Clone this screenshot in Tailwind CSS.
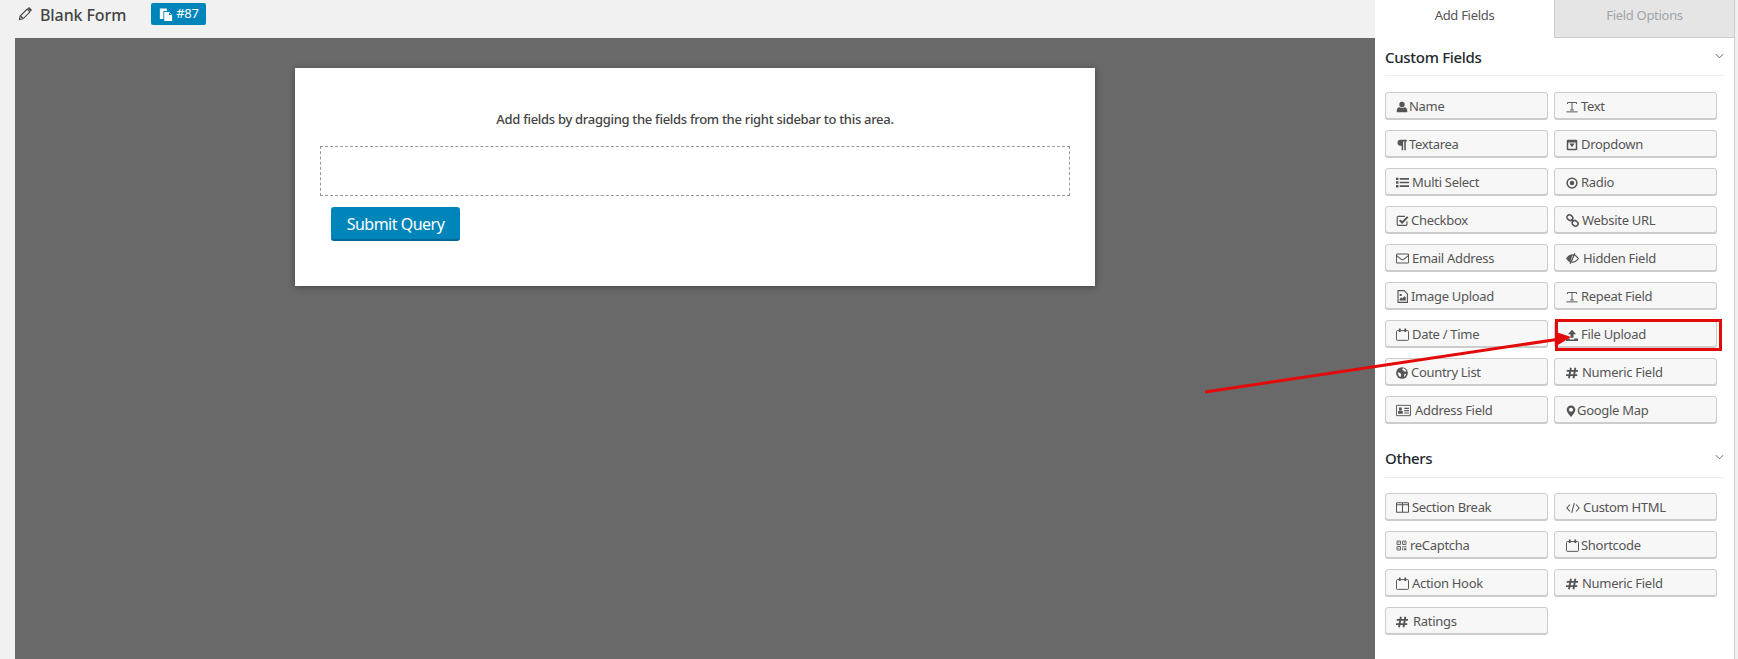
<!DOCTYPE html>
<html lang="en">
<head>
  <meta charset="UTF-8" />
  <title>Blank Form</title>
  <script src="https://cdn.jsdelivr.net/npm/@tailwindcss/browser@4"></script>
</head>
<body class="relative flex h-screen overflow-hidden bg-[#f1f1f1] font-['Noto_Sans',sans-serif] text-[13px] tracking-[-0.3px] text-[#555]">

  <svg class="hidden">
    <symbol id="i-user" viewBox="0 0 16 16"><path fill="currentColor" d="M8 1a3.600 3.600 0 1 1 0 7.200A3.600 3.600 0 0 1 8 1zM1 15v-2.500c0-2.300 1.500-4 3.700-4.200 2 1.400 4.600 1.400 6.600 0 2.200.2 3.700 1.900 3.700 4.200V15z"/></symbol>
    <symbol id="i-text" viewBox="0 0 16 16"><path fill="none" stroke="currentColor" stroke-width="1.300" d="M2 4V2h12v2M8 2v10M5.500 12h5M.5 14.500h15"/></symbol>
    <symbol id="i-para" viewBox="0 0 16 16"><path fill="currentColor" d="M6 1h8.500v2.200H13V15h-2V3.200H9.500V15h-2V9H6A4 4 0 0 1 6 1z"/></symbol>
    <symbol id="i-drop" viewBox="0 0 16 16"><path fill="currentColor" fill-rule="evenodd" d="M2.500 1h11A1.500 1.500 0 0 1 15 2.500v11a1.500 1.500 0 0 1-1.500 1.500h-11A1.500 1.500 0 0 1 1 13.500v-11A1.500 1.500 0 0 1 2.500 1zM3 4.500v8.500h10V4.500zM4.500 6h7L8 11z"/></symbol>
    <symbol id="i-list" viewBox="0 0 16 16"><path fill="currentColor" d="M0 2h3v3H0zM0 6.500h3v3H0zM0 11h3v3H0zM4.500 2.500h11.500v2H4.500zM4.500 7h11.500v2H4.500zM4.500 11.500h11.500v2H4.500z"/></symbol>
    <symbol id="i-radio" viewBox="0 0 16 16"><circle cx="8" cy="8" r="6.500" fill="none" stroke="currentColor" stroke-width="2"/><circle cx="8" cy="8" r="3" fill="currentColor"/></symbol>
    <symbol id="i-check" viewBox="0 0 16 16"><path fill="none" stroke="currentColor" stroke-width="1.400" d="M13.500 9v3.500a1.500 1.500 0 0 1-1.500 1.500H3a1.500 1.500 0 0 1-1.500-1.500v-8A1.500 1.500 0 0 1 3 3h8"/><path fill="none" stroke="currentColor" stroke-width="2.400" d="M4.500 7.500 7.500 10.500 14.500 3.500"/></symbol>
    <symbol id="i-link" viewBox="0 0 16 16"><g fill="none" stroke="currentColor" stroke-width="1.900"><rect x="1" y="1.500" width="7.500" height="6" rx="3" transform="rotate(40 4.700 4.500)"/><rect x="7.500" y="8.500" width="7.500" height="6" rx="3" transform="rotate(40 11.300 11.500)"/><path d="M6.500 6.500l3 3"/></g></symbol>
    <symbol id="i-mail" viewBox="0 0 16 16"><path fill="none" stroke="currentColor" stroke-width="1.300" d="M1.500 2.500h13a1 1 0 0 1 1 1v9a1 1 0 0 1-1 1h-13a1 1 0 0 1-1-1v-9a1 1 0 0 1 1-1zM.8 4.500 6.500 9a2.500 2.500 0 0 0 3 0l5.700-4.500"/></symbol>
    <symbol id="i-eye" viewBox="0 0 16 16"><path fill="none" stroke="currentColor" stroke-width="1.400" d="M.8 8C3 4.800 5.500 3.500 8 3.500s5 1.300 7.200 4.500C13 11.200 10.500 12.500 8 12.500S3 11.200.8 8z"/><path fill="currentColor" d="M8 3.500 5 12.500C3.500 11.800 2.200 10 1.500 8 3 5.500 5.500 3.500 8 3.500z"/><path fill="none" stroke="currentColor" stroke-width="1.600" d="M11 1.500 5 14.500"/></symbol>
    <symbol id="i-image" viewBox="0 0 16 16"><path fill="none" stroke="currentColor" stroke-width="1.400" d="M2.500.8h7.500l4 4v10.400H2.500z"/><path fill="currentColor" d="M4.500 13v-2l2-2 1.500 1.500 2.500-3 1.500 2V13zM4.500 5h2.500v2.500H4.500z"/></symbol>
    <symbol id="i-upload" viewBox="0 0 16 16"><path fill="currentColor" d="M8 1l5.500 6H10v4.500H6V7H2.500zM0 12.500h5V14h6v-1.500h5V16H0z"/></symbol>
    <symbol id="i-cal" viewBox="0 0 16 16"><path fill="none" stroke="currentColor" stroke-width="1.200" d="M1.600 3.200h12.800a1 1 0 0 1 1 1v10a1 1 0 0 1-1 1H1.600a1 1 0 0 1-1-1v-10a1 1 0 0 1 1-1z"/><path fill="currentColor" d="M3.500.5h2.200v4.500H3.500zM10.300.5h2.200v4.500h-2.200z"/></symbol>
    <symbol id="i-globe" viewBox="0 0 16 16"><circle cx="8" cy="8" r="7.800" fill="currentColor"/><path fill="#f7f7f7" d="M9 1.500c2.500.3 4 2 5 4.300l-2.500.5L10 4.500 8.200 4zM2.500 7l3 1 1.500 2-1 3.500C3.500 12.500 2.500 10 2.500 7zM11 9.500l2.500-.5c-.3 1.800-1.300 3.200-3 4.200z"/></symbol>
    <symbol id="i-hash" viewBox="0 0 16 16"><path fill="none" stroke="currentColor" stroke-width="2.500" d="M6.500 1 4 15M12.500 1 10 15M1 5.200h15M0 10.800h15"/></symbol>
    <symbol id="i-card" viewBox="0 0 16 16"><path fill="none" stroke="currentColor" stroke-width="1" d="M.5 2.500h15v11H.5z"/><path fill="currentColor" d="M3.200 4.800h3v3.200h-3zM2.200 8.500h5v3h-5zM8.800 5h5v1.300h-5zM8.800 7.500h5v1.300h-5zM8.800 10h5v1.300h-5z"/></symbol>
    <symbol id="i-pin" viewBox="0 0 16 16"><path fill="currentColor" fill-rule="evenodd" d="M8 .5a5.800 5.800 0 0 1 5.800 5.800c0 2.800-3.300 7-5.800 9.700-2.500-2.700-5.800-6.900-5.800-9.700A5.800 5.800 0 0 1 8 .5zM8 3.500a2.800 2.800 0 1 0 0 5.600 2.800 2.800 0 0 0 0-5.600z"/></symbol>
    <symbol id="i-cols" viewBox="0 0 16 16"><path fill="none" stroke="currentColor" stroke-width="1.300" d="M1.600 2.100h12.800a1 1 0 0 1 1 1v9.800a1 1 0 0 1-1 1H1.600a1 1 0 0 1-1-1V3.100a1 1 0 0 1 1-1zM8 2.100v11.800M.6 4.500h14.800"/></symbol>
    <symbol id="i-code" viewBox="0 0 16 16"><path fill="none" stroke="currentColor" stroke-width="1.200" d="M4.500 4 1 8l3.500 4M11.500 4 15 8l-3.500 4M9.500 2.500l-3 11"/></symbol>
    <symbol id="i-qr" viewBox="0 0 16 16"><path fill="none" stroke="currentColor" stroke-width="1.300" d="M1.500 1.500h5v5h-5zM9.500 1.500h5v5h-5zM1.500 9.500h5v5h-5z"/><path fill="currentColor" d="M3.300 3.300h1.400v1.400H3.300zM11.300 3.300h1.400v1.400h-1.400zM3.300 11.300h1.400v1.400H3.300zM9 9h2v2H9zM12 9h3v1.500h-3zM9 12h1.500v3H9zM12 12h3v3h-3z"/></symbol>
  </svg>

  <!-- left side: header + canvas -->
  <div class="flex w-[1375px] shrink-0 flex-col">
    <div class="flex h-[38px] shrink-0 items-start pl-[18px]">
      <svg viewBox="0 0 16 16" class="mt-[6px] h-[15px] w-[15px] text-[#444]"><path fill="none" stroke="currentColor" stroke-width="1.200" d="M9.800 3.200l3 3-7.500 7.500-3.800.8.800-3.800z"/><path fill="currentColor" d="M11.800 1 15 4.200l-1.500 1.500-3.200-3.200zM3.500 10.500l2 2-1 1-2-2z"/></svg>
      <span class="ml-[7px] mt-[3px] text-[16px] leading-[25px] font-medium tracking-[-0.1px] text-[#444]">Blank Form</span>
      <span class="ml-[25px] mt-[3px] flex h-[22px] w-[55px] items-center rounded-[2px] bg-[#0085ba] pl-[8px] text-[13px] text-white">
        <svg viewBox="0 0 16 16" class="mr-[3px] h-[15px] w-[14px]"><path fill="currentColor" d="M1 1h8v3H5v9H1z"/><path fill="currentColor" d="M6 5h5l4 4v6.500H6zm5.500 0v3.500H15z" fill-rule="evenodd"/></svg>
        #87
      </span>
    </div>
    <div class="ml-[15px] flex-1 bg-[#696969] pt-[30px] pl-[280px]">
      <div class="h-[218px] w-[800px] bg-white px-[25px] pt-[40px] shadow-[0_1px_6px_rgba(0,0,0,0.35)]">
        <p class="text-center text-[13px] leading-[22px] font-medium text-[#444]">Add fields by dragging the fields from the right sidebar to this area.</p>
        <div class="mt-[16px] h-[50px] border border-dashed border-[#999]"></div>
        <button class="ml-[11px] mt-[11px] h-[34px] w-[129px] rounded-[3px] border-b-2 border-[#006799] bg-[#0085ba] pt-[2px] text-[16px] tracking-[-0.5px] text-white">Submit Query</button>
      </div>
    </div>
  </div>

  <!-- right sidebar -->
  <div class="h-full w-[360px] shrink-0 border-r border-[#ccc] bg-white">
    <div class="flex h-[38px]">
      <div class="flex w-[179px] items-center justify-center pb-[6px] text-[13px] text-[#555]">Add Fields</div>
      <div class="flex w-[180px] items-center justify-center border-b border-l border-[#ccc] bg-[#e5e5e5] pb-[6px] text-[13px] text-[#a0a5aa]">Field Options</div>
    </div>

    <div class="px-[10px]">
      <div class="flex h-[38px] items-center justify-between border-b border-[#eee] pt-[2px]">
        <h3 class="text-[15px] font-medium text-[#23282d]">Custom Fields</h3>
        <svg viewBox="0 0 10 6" class="mb-[4px] h-[6px] w-[9px] text-[#555]"><path fill="none" stroke="currentColor" stroke-width="1" d="M1 1l4 4 4-4"/></svg>
      </div>
      <div class="mt-[16px] grid grid-cols-[163px_163px] auto-rows-[27px] gap-x-[6px] gap-y-[11px]">
        <div class="flex items-center rounded-[3px] border border-[#ccc] bg-[#f7f7f7] pt-[2px] pl-[10px] shadow-[0_1px_0_#ccc]"><svg class="mr-[1px] h-[12px] w-[12px]"><use href="#i-user"/></svg>Name</div>
        <div class="flex items-center rounded-[3px] border border-[#ccc] bg-[#f7f7f7] pt-[2px] pl-[11px] shadow-[0_1px_0_#ccc]"><svg class="mr-[3px] h-[12px] w-[12px]"><use href="#i-text"/></svg>Text</div>
        <div class="flex items-center rounded-[3px] border border-[#ccc] bg-[#f7f7f7] pt-[2px] pl-[10px] shadow-[0_1px_0_#ccc]"><svg class="mr-[1px] h-[12px] w-[12px]"><use href="#i-para"/></svg>Textarea</div>
        <div class="flex items-center rounded-[3px] border border-[#ccc] bg-[#f7f7f7] pt-[2px] pl-[11px] shadow-[0_1px_0_#ccc]"><svg class="mr-[3px] h-[12px] w-[12px]"><use href="#i-drop"/></svg>Dropdown</div>
        <div class="flex items-center rounded-[3px] border border-[#ccc] bg-[#f7f7f7] pt-[2px] pl-[10px] shadow-[0_1px_0_#ccc]"><svg class="mr-[3px] h-[13px] w-[13px]"><use href="#i-list"/></svg>Multi Select</div>
        <div class="flex items-center rounded-[3px] border border-[#ccc] bg-[#f7f7f7] pt-[2px] pl-[11px] shadow-[0_1px_0_#ccc]"><svg class="mr-[3px] h-[12px] w-[12px]"><use href="#i-radio"/></svg>Radio</div>
        <div class="flex items-center rounded-[3px] border border-[#ccc] bg-[#f7f7f7] pt-[2px] pl-[10px] shadow-[0_1px_0_#ccc]"><svg class="mr-[2px] h-[13px] w-[13px]"><use href="#i-check"/></svg>Checkbox</div>
        <div class="flex items-center rounded-[3px] border border-[#ccc] bg-[#f7f7f7] pt-[2px] pl-[11px] shadow-[0_1px_0_#ccc]"><svg class="mr-[3px] h-[13px] w-[13px]"><use href="#i-link"/></svg>Website URL</div>
        <div class="flex items-center rounded-[3px] border border-[#ccc] bg-[#f7f7f7] pt-[2px] pl-[10px] shadow-[0_1px_0_#ccc]"><svg class="mr-[3px] h-[13px] w-[13px]"><use href="#i-mail"/></svg>Email Address</div>
        <div class="flex items-center rounded-[3px] border border-[#ccc] bg-[#f7f7f7] pt-[2px] pl-[11px] shadow-[0_1px_0_#ccc]"><svg class="mr-[4px] h-[13px] w-[13px]"><use href="#i-eye"/></svg>Hidden Field</div>
        <div class="flex items-center rounded-[3px] border border-[#ccc] bg-[#f7f7f7] pt-[2px] pl-[10px] shadow-[0_1px_0_#ccc]"><svg class="mr-[2px] h-[13px] w-[13px]"><use href="#i-image"/></svg>Image Upload</div>
        <div class="flex items-center rounded-[3px] border border-[#ccc] bg-[#f7f7f7] pt-[2px] pl-[11px] shadow-[0_1px_0_#ccc]"><svg class="mr-[3px] h-[12px] w-[12px]"><use href="#i-text"/></svg>Repeat Field</div>
        <div class="flex items-center rounded-[3px] border border-[#ccc] bg-[#f7f7f7] pt-[2px] pl-[10px] shadow-[0_1px_0_#ccc]"><svg class="mr-[3px] h-[13px] w-[13px]"><use href="#i-cal"/></svg>Date / Time</div>
        <div class="flex items-center rounded-[3px] border border-[#ccc] bg-[#f7f7f7] pt-[2px] pl-[11px] shadow-[0_1px_0_#ccc]"><svg class="mr-[3px] h-[12px] w-[12px]"><use href="#i-upload"/></svg>File Upload</div>
        <div class="flex items-center rounded-[3px] border border-[#ccc] bg-[#f7f7f7] pt-[2px] pl-[10px] shadow-[0_1px_0_#ccc]"><svg class="mr-[3px] h-[12px] w-[12px]"><use href="#i-globe"/></svg>Country List</div>
        <div class="flex items-center rounded-[3px] border border-[#ccc] bg-[#f7f7f7] pt-[2px] pl-[11px] shadow-[0_1px_0_#ccc]"><svg class="mr-[4px] h-[12px] w-[12px]"><use href="#i-hash"/></svg>Numeric Field</div>
        <div class="flex items-center rounded-[3px] border border-[#ccc] bg-[#f7f7f7] pt-[2px] pl-[10px] shadow-[0_1px_0_#ccc]"><svg class="mr-[4px] h-[15px] w-[15px]"><use href="#i-card"/></svg>Address Field</div>
        <div class="flex items-center rounded-[3px] border border-[#ccc] bg-[#f7f7f7] pt-[2px] pl-[10px] shadow-[0_1px_0_#ccc]"><svg class="mr-[0px] h-[12px] w-[12px]"><use href="#i-pin"/></svg>Google Map</div>
      </div>

      <div class="mt-[17px] flex h-[38px] items-center justify-between border-b border-[#eee]">
        <h3 class="text-[15px] font-medium text-[#23282d]">Others</h3>
        <svg viewBox="0 0 10 6" class="mb-[3px] h-[6px] w-[9px] text-[#555]"><path fill="none" stroke="currentColor" stroke-width="1" d="M1 1l4 4 4-4"/></svg>
      </div>
      <div class="mt-[15px] grid grid-cols-[163px_163px] auto-rows-[27px] gap-x-[6px] gap-y-[11px]">
        <div class="flex items-center rounded-[3px] border border-[#ccc] bg-[#f7f7f7] pt-[2px] pl-[10px] shadow-[0_1px_0_#ccc]"><svg class="mr-[3px] h-[13px] w-[13px]"><use href="#i-cols"/></svg>Section Break</div>
        <div class="flex items-center rounded-[3px] border border-[#ccc] bg-[#f7f7f7] pt-[2px] pl-[11px] shadow-[0_1px_0_#ccc]"><svg class="mr-[3px] h-[14px] w-[14px]"><use href="#i-code"/></svg>Custom HTML</div>
        <div class="flex items-center rounded-[3px] border border-[#ccc] bg-[#f7f7f7] pt-[2px] pl-[10px] shadow-[0_1px_0_#ccc]"><svg class="mr-[3px] h-[11px] w-[11px]"><use href="#i-qr"/></svg>reCaptcha</div>
        <div class="flex items-center rounded-[3px] border border-[#ccc] bg-[#f7f7f7] pt-[2px] pl-[11px] shadow-[0_1px_0_#ccc]"><svg class="mr-[2px] h-[13px] w-[13px]"><use href="#i-cal"/></svg>Shortcode</div>
        <div class="flex items-center rounded-[3px] border border-[#ccc] bg-[#f7f7f7] pt-[2px] pl-[10px] shadow-[0_1px_0_#ccc]"><svg class="mr-[3px] h-[13px] w-[13px]"><use href="#i-cal"/></svg>Action Hook</div>
        <div class="flex items-center rounded-[3px] border border-[#ccc] bg-[#f7f7f7] pt-[2px] pl-[11px] shadow-[0_1px_0_#ccc]"><svg class="mr-[4px] h-[12px] w-[12px]"><use href="#i-hash"/></svg>Numeric Field</div>
        <div class="flex items-center rounded-[3px] border border-[#ccc] bg-[#f7f7f7] pt-[2px] pl-[10px] shadow-[0_1px_0_#ccc]"><svg class="mr-[5px] h-[12px] w-[12px]"><use href="#i-hash"/></svg>Ratings</div>
      </div>
    </div>
  </div>

  <!-- red annotation drawn over the screenshot -->
  <svg class="pointer-events-none absolute inset-0 h-[659px] w-[1738px]" viewBox="0 0 1738 659">
    <rect x="1556.500" y="320.500" width="164" height="29" fill="none" stroke="#e30a0a" stroke-width="3"/>
    <path d="M1205 392 1560 339" fill="none" stroke="#e30a0a" stroke-width="3"/>
    <path d="M1571 337 1556 332 1558 345z" fill="#e30a0a"/>
  </svg>
</body>
</html>
